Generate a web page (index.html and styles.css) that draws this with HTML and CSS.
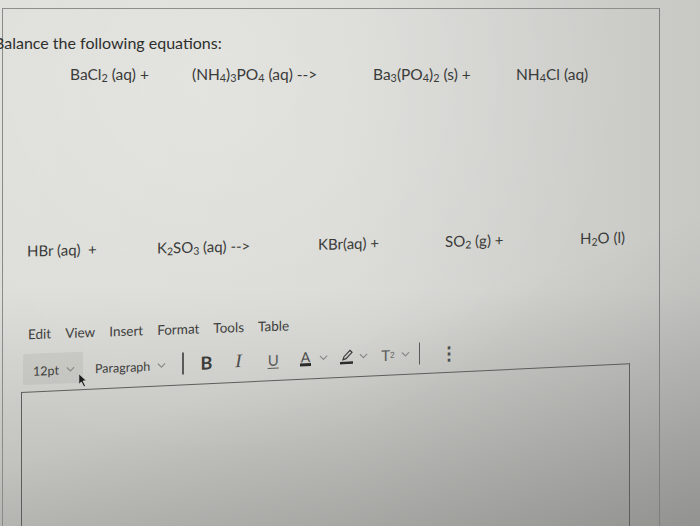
FILE: index.html
```html
<!DOCTYPE html>
<html>
<head>
<meta charset="utf-8">
<link rel="stylesheet" href="styles.css">
</head>
<body>
<div class="shade"></div>
<div class="panel">
  <div class="title">Balance the following equations:</div>
  <div class="eq eq1">
    <span>BaCl<sub>2</sub> (aq) +</span>
    <span>(NH<sub>4</sub>)<sub>3</sub>PO<sub>4</sub> (aq) --&gt;</span>
    <span>Ba<sub>3</sub>(PO<sub>4</sub>)<sub>2</sub> (s) +</span>
    <span>NH<sub>4</sub>Cl (aq)</span>
  </div>
  <div class="eq eq2">
    <span>HBr (aq) &nbsp;+</span>
    <span>K<sub>2</sub>SO<sub>3</sub> (aq) --&gt;</span>
    <span>KBr(aq) +</span>
    <span>SO<sub>2</sub> (g) +</span>
    <span>H<sub>2</sub>O (l)</span>
  </div>
  <div class="menu">
    <span>Edit</span><span>View</span><span>Insert</span><span>Format</span><span>Tools</span><span>Table</span>
  </div>
  <div class="toolbar">
    <div class="btn size">12pt <svg class="chev" viewBox="0 0 10 6"><path d="M1 1l4 4 4-4" /></svg>
      <svg class="cursor" viewBox="0 0 12 18"><path d="M1 1v13l3-3 3 6 2-1-3-6h4z" /></svg>
    </div>
    <div class="btn para">Paragraph <svg class="chev" viewBox="0 0 10 6"><path d="M1 1l4 4 4-4" /></svg></div>
    <div class="sep"></div>
    <div class="ic b">B</div>
    <div class="ic i">I</div>
    <div class="ic u">U</div>
    <div class="ic a"><span class="letA">A</span><svg class="chev" viewBox="0 0 10 6"><path d="M1 1l4 4 4-4" /></svg></div>
    <div class="ic hl">
      <svg class="pen" viewBox="0 0 16 16"><path d="M4 11l1-3 6-6 2 2-6 6z" /><rect x="1" y="13" width="13" height="2.5" class="fill" /></svg>
      <svg class="chev" viewBox="0 0 10 6"><path d="M1 1l4 4 4-4" /></svg>
    </div>
    <div class="ic t">T<sup>2</sup><svg class="chev" viewBox="0 0 10 6"><path d="M1 1l4 4 4-4" /></svg></div>
    <div class="sep sep2"></div>
    <div class="ic more">&#8942;</div>
  </div>
  <div class="editor"></div>
</div>
</body>
</html>
```
FILE: styles.css
```css
html, body {
  margin: 0;
  padding: 0;
}
body {
  width: 700px;
  height: 526px;
  overflow: hidden;
  position: relative;
  font-family: Lato, "Open Sans", sans-serif;
  color: #333432;
  background:
    linear-gradient(180deg, rgba(0,0,0,0) 0%, rgba(0,0,0,0) 55%, rgba(60,60,58,0.22) 100%),
    linear-gradient(90deg, #dcdcd8 0%, #d8d8d4 50%, #c8c9c5 100%);
}
.shade {
  position: absolute;
  left: 0; top: 0;
  width: 700px; height: 526px;
  background: radial-gradient(ellipse at 30% 15%, rgba(255,255,255,0.25), rgba(255,255,255,0) 60%),
              linear-gradient(160deg, rgba(0,0,0,0) 60%, rgba(40,40,40,0.18) 100%);
  pointer-events: none;
}
.panel {
  position: relative;
  margin-left: 2px;
  margin-top: 8px;
  width: 658px;
  height: 518px;
  overflow-x: visible;
  overflow-y: clip;
  border-top: 1px solid #8e8f8c;
  border-left: 1px solid #8a8b88;
  border-right: 1.5px solid #7e7f7c;
  box-sizing: border-box;
  display: flex;
  flex-direction: column;
}
.title {
  font-size: 16px;
  margin-left: -9px;
  margin-top: 24px;
  white-space: nowrap;
  color: #2e2f2d;
}
.eq {
  display: grid;
  white-space: nowrap;
  color: #3a3b39;
}
.eq sub {
  font-size: 0.7em;
  vertical-align: -2px;
  line-height: 0;
}
.eq1 {
  grid-template-columns: 122px 181px 143px auto;
  padding-left: 67px;
  margin-top: 13px;
  font-size: 15.5px;
}
.eq2 {
  grid-template-columns: 130px 161px 127px 135px auto;
  padding-left: 24px;
  margin-top: 159px;
  font-size: 15px;
  transform: skewY(-1.3deg);
  transform-origin: left center;
}
.menu {
  display: flex;
  gap: 14px;
  font-size: 13.5px;
  padding-left: 25px;
  margin-top: 67px;
  color: #3d3e3c;
  transform: skewY(-1.9deg);
  transform-origin: left center;
}
.toolbar {
  display: flex;
  align-items: center;
  padding-left: 20px;
  margin-top: 12px;
  height: 31px;
  flex-shrink: 0;
  font-size: 12.5px;
  color: #3d3e3c;
  transform: skewY(-2.4deg);
  transform-origin: left center;
}
.btn {
  display: flex;
  align-items: center;
  height: 31px;
  box-sizing: border-box;
  white-space: nowrap;
}
.size {
  position: relative;
  width: 60px;
  padding-left: 10px;
  padding-top: 3px;
  background: rgba(150,150,145,0.18);
  border-radius: 2px;
}
.para {
  padding-left: 12px;
  padding-top: 3px;
  width: 99px;
}
.chev {
  width: 9px;
  height: 6px;
  margin-left: 7px;
  fill: none;
  stroke: #8a8b88;
  stroke-width: 1.3;
}
.cursor {
  position: absolute;
  left: 55px;
  top: 21px;
  width: 10px;
  height: 15px;
  fill: #1c1c1c;
  stroke: #e6e6e2;
  stroke-width: 0.8;
}
.sep {
  width: 1.5px;
  height: 22px;
  background: #5a5b59;
}
.ic {
  display: flex;
  align-items: center;
  white-space: nowrap;
}
.b {
  font-weight: 700;
  font-size: 18px;
  margin-left: 17px;
  color: #3a3b39;
}
.i {
  font-family: "Liberation Serif", serif;
  font-style: italic;
  font-size: 19px;
  margin-left: 23px;
  color: #4a4b49;
}
.u {
  font-size: 15px;
  margin-left: 26px;
  text-decoration: underline;
  text-underline-offset: 2px;
  text-decoration-thickness: 1px;
  color: #5a5b59;
}
.a {
  margin-left: 21px;
}
.letA {
  font-size: 14px;
  border-bottom: 3px solid #2c2d2b;
  line-height: 13px;
  padding: 0 1px;
  color: #4a4b49;
}
.a .chev { margin-left: 8px; }
.hl {
  margin-left: 11px;
}
.pen {
  width: 16px;
  height: 16px;
  fill: none;
  stroke: #3a3b39;
  stroke-width: 1.2;
}
.pen .fill {
  fill: #2c2d2b;
  stroke: none;
}
.hl .chev { margin-left: 4px; }
.t {
  font-size: 15px;
  margin-left: 13px;
  margin-right: 9px;
  color: #5a5b59;
}
.t sup {
  font-size: 8px;
  vertical-align: 7px;
  line-height: 0;
}
.t .chev { margin-left: 6px; }
.more {
  margin-left: 20px;
  font-size: 18px;
  font-weight: 700;
  color: #4a4b49;
}
.editor {
  margin-left: 18px;
  margin-top: 6px;
  width: 609px;
  height: 200px;
  flex-shrink: 0;
  border: 1.5px solid #5d5e5b;
  border-bottom: none;
  transform: skewY(-2.7deg);
  transform-origin: left top;
  box-sizing: border-box;
}
```
